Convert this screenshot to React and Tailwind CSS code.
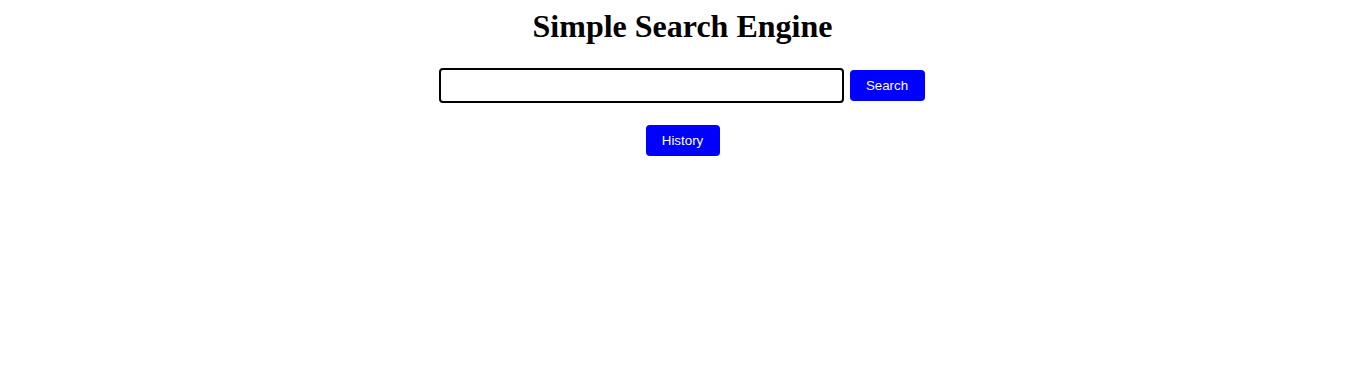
export default function App() {
  return (
    <div className="flex w-full flex-col items-center bg-white pt-[2px] pl-[6px]">
      <h1 className="m-0 text-[32px] font-bold leading-normal text-black" style={{ fontFamily: '"Liberation Serif", "Times New Roman", serif' }}>
        Simple Search Engine
      </h1>
      <div className="mt-[18px] -ml-[2px] flex items-center gap-[6px]">
        <input
          type="text"
          className="h-[35px] w-[405px] rounded-[4px] border-2 border-black bg-white px-2 outline-none"
        />
        <button
          className="h-[31px] w-[75px] rounded-[4px] bg-[#0000ff] text-[13.33px] text-white"
          style={{ fontFamily: '"Liberation Sans", Arial, sans-serif' }}
        >
          Search
        </button>
      </div>
      <button
        className="mt-[22px] h-[31px] w-[74px] rounded-[4px] bg-[#0000ff] text-[13.33px] text-white"
        style={{ fontFamily: '"Liberation Sans", Arial, sans-serif' }}
      >
        History
      </button>
    </div>
  );
}
